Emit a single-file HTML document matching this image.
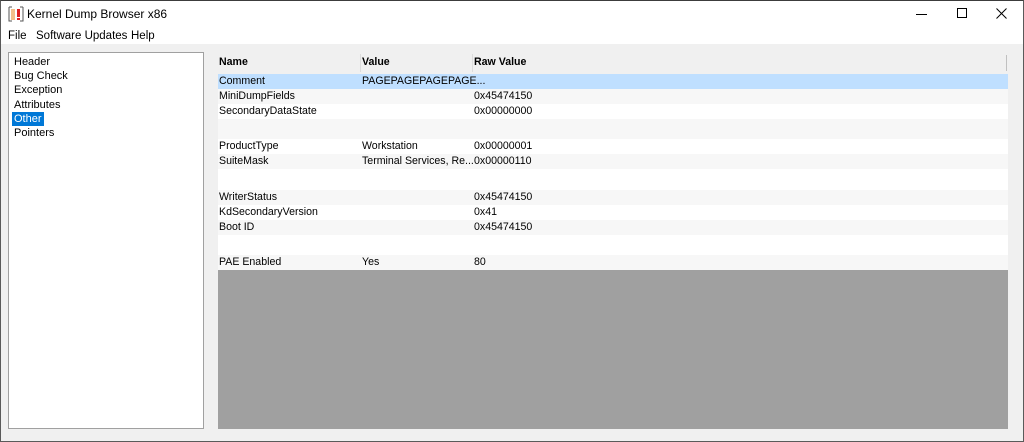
<!DOCTYPE html>
<html><head><style>
*{margin:0;padding:0;box-sizing:border-box}
body{width:1024px;height:442px;overflow:hidden;background:#f0f0f0;font-family:"Liberation Sans",sans-serif;font-size:11px;color:#000;position:relative}
.win{position:absolute;left:0;top:0;width:1024px;height:442px;border:1px solid #5a5a5a;border-top-color:#3c3c3c}
.title{position:absolute;left:0;top:0;width:1024px;height:28px;background:#fff}
.menu{position:absolute;left:0;top:28px;width:1024px;height:16px;background:#fff}
.t{position:absolute;white-space:nowrap}
.list{position:absolute;left:8px;top:52px;width:196px;height:377px;background:#fff;border:1px solid #a0a0a0}
.grid{position:absolute;left:218px;top:52px;width:790px;height:377px;background:#a0a0a0;font-size:10.6px}
.row{position:absolute;left:0;width:790px;height:15px}
.row span{position:absolute;top:1px;white-space:nowrap}
.g{background:#f7f7f7}.w{background:#fff}
</style></head><body>
<div class="title">
<svg style="position:absolute;left:8px;top:6px" width="16" height="16"><rect x="1" y="1" width="14" height="14" fill="#fff"/><rect x="3" y="3" width="4" height="11" fill="#f3c08a"/><rect x="9" y="3" width="3" height="8" fill="#d22"/><rect x="9" y="12" width="3" height="2" fill="#d22"/><path d="M1 1h3M1 1v14h3M15 1h-3M15 1v14h-3" stroke="#555" fill="none"/></svg>
<div class="t" style="left:27px;top:7px;font-size:12px">Kernel Dump Browser x86</div>
<div style="position:absolute;left:916px;top:14px;width:11px;height:1px;background:#000"></div>
<div style="position:absolute;left:957px;top:8px;width:10px;height:10px;border:1px solid #000"></div>
<svg style="position:absolute;left:996px;top:8px" width="11" height="11"><path d="M0.5 0.5L10.5 10.5M10.5 0.5L0.5 10.5" stroke="#000"/></svg>
</div>
<div class="menu">
<div class="t" style="left:8px;top:2px;font-size:11.5px">File</div>
<div class="t" style="left:36px;top:2px;font-size:11.5px">Software Updates</div>
<div class="t" style="left:131px;top:2px;font-size:11.5px">Help</div>
</div>
<div class="list">
<div class="t" style="left:5px;top:3px">Header</div>
<div class="t" style="left:5px;top:17px">Bug Check</div>
<div class="t" style="left:5px;top:31px">Exception</div>
<div class="t" style="left:5px;top:46px">Attributes</div>
<div class="t" style="left:3px;top:59px;background:#0078d7;color:#fff;padding:1px 2px;height:14px">Other</div>
<div class="t" style="left:5px;top:74px">Pointers</div>
</div>
<div class="grid">
<div class="row" style="top:0;height:22px;background:#f0f0f0">
<span style="left:1px;top:4px;font-weight:bold">Name</span>
<span style="left:144px;top:4px;font-weight:bold">Value</span>
<span style="left:256px;top:4px;font-weight:bold">Raw Value</span>
<div style="position:absolute;left:142px;top:2px;width:1px;height:18px;background:#dcdcdc"></div>
<div style="position:absolute;left:254px;top:2px;width:1px;height:18px;background:#dcdcdc"></div>
<div style="position:absolute;left:788px;top:3px;width:1px;height:16px;background:#c0c0c0"></div>
</div>
<div class="row" style="top:22px;background:#bfdfff"><span style="left:1px">Comment</span><span style="left:144px">PAGEPAGEPAGEPAGE...</span></div>
<div class="row g" style="top:37px"><span style="left:1px">MiniDumpFields</span><span style="left:256px">0x45474150</span></div>
<div class="row w" style="top:52px"><span style="left:1px">SecondaryDataState</span><span style="left:256px">0x00000000</span></div>
<div class="row g" style="top:67px;height:20px"></div>
<div class="row w" style="top:87px"><span style="left:1px">ProductType</span><span style="left:144px">Workstation</span><span style="left:256px">0x00000001</span></div>
<div class="row g" style="top:102px"><span style="left:1px">SuiteMask</span><span style="left:144px">Terminal Services, Re...</span><span style="left:256px">0x00000110</span></div>
<div class="row w" style="top:117px;height:21px"></div>
<div class="row g" style="top:138px"><span style="left:1px">WriterStatus</span><span style="left:256px">0x45474150</span></div>
<div class="row w" style="top:153px"><span style="left:1px">KdSecondaryVersion</span><span style="left:256px">0x41</span></div>
<div class="row g" style="top:168px"><span style="left:1px">Boot ID</span><span style="left:256px">0x45474150</span></div>
<div class="row w" style="top:183px;height:20px"></div>
<div class="row g" style="top:203px"><span style="left:1px">PAE Enabled</span><span style="left:144px">Yes</span><span style="left:256px">80</span></div>
</div>
<div class="win"></div>
</body></html>
